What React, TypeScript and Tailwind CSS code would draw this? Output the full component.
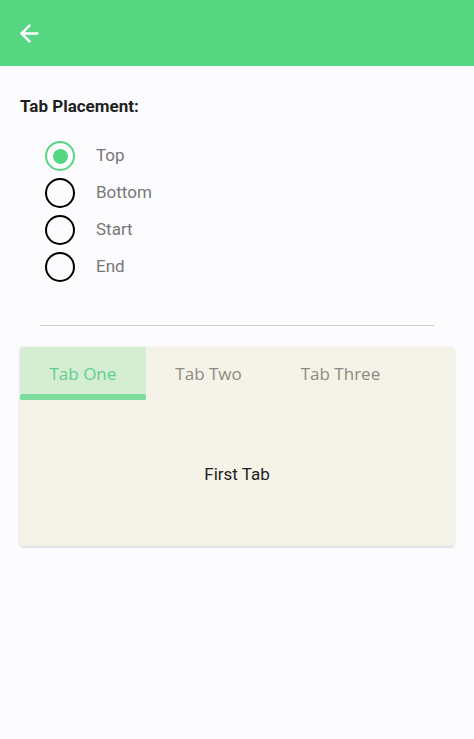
import { ArrowLeft } from 'lucide-react';
import { useState } from 'react';

const placements = ['Top', 'Bottom', 'Start', 'End'];
const tabs = ['Tab One', 'Tab Two', 'Tab Three'];

export default function App() {
  const [placement, setPlacement] = useState('Top');
  const [active, setActive] = useState(0);

  return (
    <div className="min-h-[739px] bg-[#fcfbfe] font-['Roboto',sans-serif]">
      <header className="h-[66px] bg-[#55d681] flex items-center px-[16px]">
        <ArrowLeft className="h-[27px] w-[27px] text-white" strokeWidth={2.2} />
      </header>

      <div className="px-[20px] pt-[30px]">
        <h2 className="text-[17px] font-bold text-[#1f1f1f] leading-[20px]">Tab Placement:</h2>

        <div className="mt-[25px] pl-[25px] flex flex-col gap-[7px]">
          {placements.map((p) => (
            <button
              key={p}
              onClick={() => setPlacement(p)}
              className="flex items-center h-[30px] text-left"
            >
              {placement === p ? (
                <span className="h-[30px] w-[30px] rounded-full border-[2.5px] border-[#55d681] flex items-center justify-center">
                  <span className="h-[15px] w-[15px] rounded-full bg-[#55d681]" />
                </span>
              ) : (
                <span className="h-[30px] w-[30px] rounded-full border-[2.5px] border-black" />
              )}
              <span className="ml-[21px] text-[17px] text-[#777777]">{p}</span>
            </button>
          ))}
        </div>

        <div className="mt-[43px] mx-[20px] h-px bg-[#cccccc]" />

        <div className="mt-[21px] bg-[#f5f2e8] rounded-[3px] shadow-[0_1px_3px_rgba(0,0,0,0.18)] h-[199px] flex flex-col">
          <div className="flex">
            {tabs.map((t, i) => (
              <button
                key={t}
                onClick={() => setActive(i)}
                className={`relative h-[53px] px-[29.5px] font-['Open_Sans',sans-serif] text-[17px] ${
                  active === i ? 'bg-[#d4edd3] text-[#5fd08a] rounded-tl-[3px]' : 'text-[#8c8a84]'
                }`}
              >
                <span className="block mt-[1px]">{t}</span>
                {active === i && (
                  <span className="absolute left-0 right-0 bottom-0 h-[6px] bg-[#7ddc9c] rounded-[2px]" />
                )}
              </button>
            ))}
          </div>
          <div className="flex-1 flex items-center justify-center pt-[4px]">
            <p className="text-[17px] text-[#222222]">First Tab</p>
          </div>
        </div>
      </div>
    </div>
  );
}
